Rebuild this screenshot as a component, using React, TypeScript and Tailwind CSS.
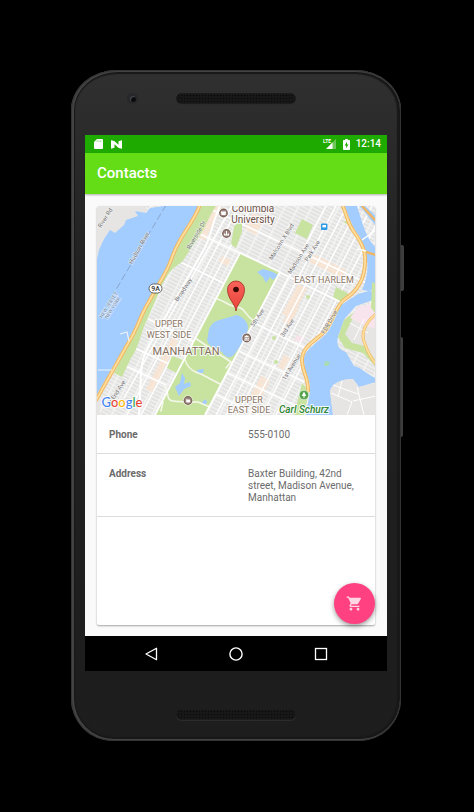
import type { ReactNode } from "react";
import { MdShoppingCart } from "react-icons/md";

const contact = [
  { label: "Phone", value: "555-0100" },
  { label: "Address", value: "Baxter Building, 42nd street, Madison Avenue, Manhattan" },
];

// x position of each avenue at the top and bottom edge of the map
const avenues = [
  [239, 127],
  [252, 141],
  [326, 216],
  [336, 226],
  [347, 237],
  [359, 249],
  [372, 262],
  [386, 276],
];

const crossStreets = [
  "M204 206L375 287",
  "M198 233L345 304",
  "M180 262L240 291",
  "M250 321L310 350",
  "M148 319L196 343",
  "M235 349L304 382",
  "M130 346L180 369",
  "M226 372L306 411",
  "M118 362L166 385",
  "M213 393L258 415",
];

const streetNames = [
  { name: "River Rd", x: 107, y: 219, angle: -57 },
  { name: "Hudson River", x: 141, y: 249, angle: -60 },
  { name: "Riverside Dr", x: 198, y: 236, angle: -60 },
  { name: "Broadway", x: 185, y: 291, angle: -57 },
  { name: "Malcolm X Blvd", x: 283, y: 243, angle: -58 },
  { name: "Madison Ave", x: 300, y: 260, angle: -58 },
  { name: "Park Ave", x: 314, y: 252, angle: -58 },
  { name: "5th Ave", x: 259, y: 319, angle: -57 },
  { name: "3rd Ave", x: 289, y: 329, angle: -57 },
  { name: "1st Avenue", x: 293, y: 368, angle: -58 },
  { name: "FDR Drive", x: 331, y: 323, angle: -60 },
  { name: "W End Ave", x: 118, y: 394, angle: -57 },
];

const places = [
  { name: "Columbia", x: 253, y: 212, size: 10, color: "#6b4f44" },
  { name: "University", x: 253, y: 223, size: 10, color: "#6b4f44" },
  { name: "EAST HARLEM", x: 324, y: 283, size: 9, color: "#8a7563" },
  { name: "UPPER", x: 169, y: 327, size: 9, color: "#8a7563" },
  { name: "WEST SIDE", x: 169, y: 338, size: 9, color: "#8a7563" },
  { name: "MANHATTAN", x: 186, y: 355, size: 11, color: "#846e5c" },
  { name: "UPPER", x: 249, y: 403, size: 9, color: "#8a7563" },
  { name: "EAST SIDE", x: 249, y: 413, size: 9, color: "#8a7563" },
];

const parkPath = "M240 253L280 272L205 415H155Z";
const westHighway = "M200 204C197 216 186 229 179 242C171 256 172 262 164 275L147 305C140 317 138 327 130 340L95 402";
const eastHighway =
  "M342 204C348 218 347 222 354 232C364 246 366 254 365 264C364 282 356 292 345 299C336 305 335 318 325 331C316 341 302 346 302 360C302 372 309 378 308 392";

function Poi({ x, y, children }: { x: number; y: number; children: ReactNode }) {
  return (
    <g transform={`translate(${x} ${y})`}>
      <circle r="5" fill="#fff" opacity="0.8" />
      <circle r="4.4" fill="#7b6056" />
      <circle r="3.3" fill="#fff" opacity="0.25" />
      <g fill="#fff">{children}</g>
    </g>
  );
}

function ContactMap() {
  return (
    <svg viewBox="97 206 278 209" className="block w-full" role="img" aria-label="Map">
      <defs>
        <pattern id="blocks" width="12" height="3.6" patternUnits="userSpaceOnUse" patternTransform="rotate(27)">
          <rect width="12" height="3.6" fill="#f4f4f3" />
          <rect x="0.6" y="0.5" width="10.4" height="2.4" fill="#e3e2e2" />
        </pattern>
        <linearGradient id="pin" x1="0" y1="0" x2="0" y2="1">
          <stop offset="0" stopColor="#f8625a" />
          <stop offset="1" stopColor="#e9453b" />
        </linearGradient>
      </defs>

      <rect x="96" y="206" width="280" height="209" fill="#e6e5e3" />
      <rect x="146" y="206" width="230" height="209" fill="url(#blocks)" />
      <path d="M130 340L150 300V415H100V398Z" fill="url(#blocks)" />

      {/* commercial areas */}
      <g fill="#fbe3cf" opacity="0.75">
        <path d="M253 213L264 218L256 235L245 229Z" />
        <path d="M222 256L231 260L227 266L219 262Z" />
        <path d="M215 206H222L205 240L199 238Z" />
        <path d="M298 284L307 288L292 318L282 314Z" />
        <path d="M313 254L346 270L342 278L309 262Z" />
        <path d="M261 376L270 380L260 402L249 398Z" />
        <path d="M172 338L178 341L152 392L146 389Z" />
        <path d="M292 305L299 308L290 325L283 322Z" />
        <path d="M284 355L290 358L283 370L278 367Z" />
      </g>
      <path d="M297 335L305 338L302 343L294 340Z" fill="#f7e3ea" />

      {/* streets */}
      <g stroke="#fff" fill="none">
        {avenues.map(([top, bottom]) => (
          <path key={top} d={`M${top} 206L${bottom} 415`} strokeWidth="1.5" />
        ))}
        {crossStreets.map((d) => (
          <path key={d} d={d} strokeWidth="1.6" />
        ))}
        <path d="M220 206C212 222 211 239 203 251L151 342C143 356 142 362 141 374L139 415" strokeWidth="2" />
        <path d="M232 206L124 398" strokeWidth="1.5" />
      </g>

      {/* parks */}
      <g fill="#c8e3a0">
        <path d={parkPath} />
        <path d="M199 206H216C207 219 206 228 198 238L182 262C167 271 164 281 157 297L147 320C141 331 139 348 131 358L122 377L114 373Z" />
        <path d="M302 219L313 225L307 239L295 233Z" />
        <path d="M234 226L242 220L242 232L236 248L231 244Z" />
        <path d="M336 287L349 294L342 302L333 297Z" />
        <path d="M172 356L186 361L178 374L167 368Z" />
        <path d="M343 222L350 219L352 226Z" />
        <path d="M302 383L309 391L304 415H294Z" />
        <circle cx="274" cy="338" r="2" />
        <circle cx="276" cy="362" r="2" />
        <circle cx="308" cy="297" r="2" />
      </g>

      {/* rivers */}
      <g fill="#a3ccff">
        <path d="M164 206L150 208L146 213L135 211L138 216L126 220L124 225L115 233L110 230L104 239L99 250L96 264V396L127 342L143 312L164 273L180 238L199 206Z" />
        <path d="M345 206H357L363 225C367 236 371 244 376 247V378C367 375 361 367 354 366L346 352C339 350 336 345 338 337L345 318L356 306L376 299V289L358 294L341 305C337 313 334 323 327 333C318 343 304 349 304 360C304 372 311 379 310 391L306 415H333L330 391C332 383 342 379 353 379L359 387L376 382V292L362 290C371 271 368 255 360 237C354 230 349 219 345 206Z" />
        <path d="M376 226L370 219L364 211L359 206H365L376 216Z" />
        <path d="M208 336C208 326 213 321 223 319L237 315C242 317 247 320 248 327C248 336 241 346 236 352C231 360 226 358 222 352L212 347C208 344 206 340 208 336Z" />
        <path d="M257 272L263 269L273 272L278 275L273 280L270 277L266 283L263 277Z" />
        <path d="M182 373L185 378L184 384L190 382L191 386L184 389L179 396L175 387L180 383Z" />
        <path d="M197 370L204 369L203 373L198 373Z" />
        <path d="M202 402L206 399L207 403L203 405Z" />
      </g>

      {/* Astoria side */}
      <path d="M376 304L357 310L344 320L338 337L345 348L363 353L376 367Z" fill="#e6e5e3" />
      <path d="M357 310L344 320L338 337L345 348L363 353L376 367V361L365 346L352 343L345 334Z" fill="#c8e3a0" />
      <path d="M358 307L376 303V328L368 327L350 318Z" fill="#f8e4ec" />
      <path d="M353 379C342 379 332 383 330 391L333 415H376V383L359 387Z" fill="#e6e5e3" />
      <g stroke="#fff" strokeWidth="1" fill="none">
        <path d="M331 393L352 402L347 415M342 381L338 397M353 401L376 396M357 387L364 415M333 385L358 394" />
        <path d="M350 323L368 333M354 340L364 319" />
      </g>
      <path d="M372 282L376 284V314L371 308Z" fill="#c8e3a0" />
      <path d="M325 361L330 362L328 366H324Z" fill="#a9dcb4" />

      {/* paths inside the park */}
      <g stroke="#f5f7ea" strokeWidth="1.6" fill="none" strokeLinecap="round">
        <path d="M213 298C223 299 228 306 237 307S244 315 254 321" />
        <path d="M240 253L280 272" stroke="#fff" />
        <path d="M184 354C185 365 190 371 201 374L220 384" />
        <path d="M195 338L231 362L226 368" />
        <path d="M164 386C170 392 165 400 173 401S187 402 198 402L210 407" />
        <path d="M163 402L161 411" />
      </g>
      <path d="M240 253L155 415M280 272L205 415" stroke="#fff" strokeWidth="1.8" />

      {/* highways */}
      <g fill="none">
        <g stroke="#eeb663" strokeWidth="3.8">
          <path d={westHighway} />
          <path d={eastHighway} />
          <path d="M376 314C365 323 360 334 365 344C368 353 373 361 377 365" strokeWidth="3" />
          <path d="M363 251L376 255M362 206L376 221" strokeWidth="2.4" />
        </g>
        <g stroke="#ffdf9c" strokeWidth="1.8">
          <path d={westHighway} />
          <path d={eastHighway} />
          <path d="M376 314C365 323 360 334 365 344C368 353 373 361 377 365" />
        </g>
        <path d="M362 240L376 230M358 249L366 251" stroke="#fff" strokeWidth="1.4" />
        <path d="M120 334L127 332L129 341M98 370H112" stroke="#eef3fa" strokeWidth="1.2" />
        <path d="M166 205L104 310" stroke="#7d97b6" strokeWidth="0.7" strokeDasharray="7 3" />
      </g>

      <g fontFamily="Roboto, 'Liberation Sans', sans-serif" textAnchor="middle">
        <g fontSize="6" fill="#6f6f6f" stroke="#fff" strokeOpacity="0.6" strokeWidth="1.2" paintOrder="stroke">
          {streetNames.map(({ name, x, y, angle }) => (
            <text key={name} transform={`translate(${x} ${y}) rotate(${angle})`}>
              {name}
            </text>
          ))}
        </g>
        <g fontSize="5" fill="#7c92ab" stroke="#fff" strokeOpacity="0.5" strokeWidth="1.4" paintOrder="stroke">
          <text transform="translate(110 306) rotate(-57)">NEW JERSEY</text>
          <text transform="translate(114 309) rotate(-57)">NEW YORK</text>
        </g>
        <g stroke="#fff" strokeOpacity="0.85" strokeWidth="2" strokeLinejoin="round" paintOrder="stroke">
          {places.map(({ name, x, y, size, color }) => (
            <text key={`${name}-${x}`} x={x} y={y} fontSize={size} fill={color}>
              {name}
            </text>
          ))}
          <text x="304" y="413" fontSize="10" fontStyle="italic" fontWeight="500" fill="#2f8632">
            Carl Schurz
          </text>
          <text x="122" y="407" fontSize="13" fontWeight="500" fontFamily="Lato, sans-serif">
            <tspan fill="#4285f4">G</tspan>
            <tspan fill="#ea4335">o</tspan>
            <tspan fill="#fbbc05">o</tspan>
            <tspan fill="#4285f4">g</tspan>
            <tspan fill="#34a853">l</tspan>
            <tspan fill="#ea4335">e</tspan>
          </text>
        </g>
        <rect x="149" y="284" width="13" height="9" rx="4.5" fill="#fff" stroke="#555" strokeWidth="0.9" />
        <text x="155.5" y="291" fontSize="7" fontWeight="500" fill="#333">
          9A
        </text>
      </g>

      <Poi x={223.5} y={213}>
        <path d="M-2.6 -1.5H2.6L2 2H-2Z" />
      </Poi>
      <Poi x={226.5} y={233.5}>
        <path d="M-2.6 2H2.6V0.5L1.3 -0.5V1H0.5V-2.5H-0.5V1H-1.3V-0.5L-2.6 0.5Z" />
      </Poi>
      <Poi x={246.7} y={338}>
        <path d="M-2.6 -1L0 -2.7L2.6 -1ZM-2 -0.5H-1V1.5H-2ZM-0.5 -0.5H0.5V1.5H-0.5ZM1 -0.5H2V1.5H1ZM-2.6 1.7H2.6V2.4H-2.6Z" />
      </Poi>
      <Poi x={188} y={400.5}>
        <path d="M-2.5 -2L-1 -1H1.5C2.8 0 2.5 2 1 2H-1C-2.3 1.5 -2 0 -1.5 -0.5Z" />
      </Poi>

      <circle cx="304" cy="395" r="4.8" fill="#55a44c" stroke="#fff" strokeWidth="0.6" />
      <path d="M304 391.5L306.3 396H304.5V398H303.5V396H301.7Z" fill="#fff" />
      <rect x="321" y="223.5" width="6.4" height="6.4" rx="1" fill="#2b9be8" />
      <rect x="322.4" y="225" width="3.6" height="2.4" fill="#fff" />

      <path
        d="M236 311C235.5 304 227.5 299 227.5 289.5A8.5 8.5 0 0 1 244.5 289.5C244.5 299 236.5 304 236 311Z"
        fill="url(#pin)"
        stroke="#a52a20"
        strokeWidth="0.8"
      />
      <circle cx="236" cy="289.5" r="2.8" fill="#3a0906" />
    </svg>
  );
}

function StatusBar() {
  return (
    <div className="flex h-[18px] items-center justify-between bg-[#1faa00] pr-1.5 pl-[9px] text-white">
      <div className="flex items-center gap-2">
        <svg viewBox="0 0 9 10" className="h-2.5 w-[9px]" fill="currentColor" aria-hidden="true">
          <path d="M3 0H8Q9 0 9 1V9Q9 10 8 10H1Q0 10 0 9V3Z" />
          <path d="M3.2 1.4V2.9M5 1.4V2.9M6.8 1.4V2.9" stroke="#1faa00" strokeWidth="0.5" />
        </svg>
        <svg viewBox="0 0 11 9" className="h-[9px] w-[11px]" fill="currentColor" aria-hidden="true">
          <path d="M0 0.3L3.3 1L7.5 4.8V1.2L11 0.3V8.7L7.7 8L3.5 4.2V7.8L0 8.7Z" />
        </svg>
      </div>
      <div className="flex items-center gap-1.5">
        <svg viewBox="0 0 14 12" className="h-3 w-3.5" fill="currentColor" aria-hidden="true">
          <path d="M13 1V11H3Z" opacity="0.35" />
          <path d="M9.5 4.5V11H3Z" />
          <text x="0" y="5" fontSize="5" fontWeight="700" fontFamily="Roboto, sans-serif">
            LTE
          </text>
        </svg>
        <svg viewBox="0 0 7 11" className="h-[11px] w-[7px]" fill="currentColor" aria-hidden="true">
          <path d="M2.2 0H4.8V1H6.2Q7 1 7 1.8V10.2Q7 11 6.2 11H0.8Q0 11 0 10.2V1.8Q0 1 0.8 1H2.2Z" />
          <path d="M4 2.8L1.6 6.5H3.2V9.2L5.5 5.4H4Z" fill="#1faa00" />
        </svg>
        <span className="text-[10px] leading-3 font-medium">12:14</span>
      </div>
    </div>
  );
}

function NavBar() {
  return (
    <nav className="flex h-[35px] items-center justify-center gap-[45px] bg-black text-white">
      <button type="button" aria-label="Back" className="flex w-10 justify-center">
        <svg viewBox="0 0 14 14" className="size-3.5" fill="none" stroke="currentColor" strokeWidth="1.3">
          <path d="M12.5 1.3V12.7L2 7Z" strokeLinejoin="round" />
        </svg>
      </button>
      <button type="button" aria-label="Home" className="flex w-10 justify-center">
        <svg viewBox="0 0 14 14" className="size-3.5" fill="none" stroke="currentColor" strokeWidth="1.4">
          <circle cx="7" cy="7" r="6.1" />
        </svg>
      </button>
      <button type="button" aria-label="Recent apps" className="flex w-10 justify-center">
        <svg viewBox="0 0 14 14" className="size-3.5" fill="none" stroke="currentColor" strokeWidth="1.3">
          <rect x="1.5" y="1.5" width="11" height="11" />
        </svg>
      </button>
    </nav>
  );
}

function Speaker() {
  return (
    <div className="h-[11px] w-[120px] rounded-full border border-[#1c1c1d] bg-[#171717] bg-[radial-gradient(#080808_1px,transparent_1px)] bg-[size:3px_3px] shadow-[0_1px_0_#2b2b2b]" />
  );
}

export default function App() {
  return (
    <div className="flex min-h-screen flex-col bg-black pt-[70px] pr-[73px] pb-[71px] pl-[71px] font-[Roboto,'Liberation_Sans',sans-serif]">
      <div className="relative flex flex-1 flex-col">
        {/* power and volume keys */}
        <div className="absolute top-[175px] -right-[3px] h-[46px] w-1 rounded-r-xs bg-[#3d3d3d]" />
        <div className="absolute top-[267px] -right-[2px] h-[100px] w-1 rounded-r-xs bg-[#3d3d3d]" />

        <div className="relative flex flex-1 flex-col rounded-t-[46px_40px] rounded-b-[42px] bg-linear-to-b from-[#303031] via-[#212122] via-30% to-[#1d1d1e] px-3.5 shadow-[inset_0_0_0_1px_#333334,inset_1px_0_0_2px_#434344,inset_0_0_1px_4px_#181818]">
          <div className="relative flex h-[65px] items-start justify-center pt-[23px]">
            <div className="absolute left-[42px] flex size-[11px] items-center justify-center rounded-full bg-[#28282a]">
              <div className="size-1.5 rounded-full bg-[#0b0b0c] shadow-[inset_1px_1px_1px_#4a5058]" />
            </div>
            <Speaker />
          </div>

          <div className="flex flex-1 flex-col bg-[#fafafa]">
            <StatusBar />
            <header className="relative flex h-[41px] items-center bg-[#64dd17] px-3 shadow-[0_1px_2px_rgba(0,0,0,0.3)]">
              <h1 className="text-[15px] font-medium text-white">Contacts</h1>
            </header>

            <main className="relative flex flex-1 flex-col px-3 pt-3 pb-[11px]">
              <section className="flex-1 overflow-hidden rounded-xs bg-white shadow-[0_1px_2px_rgba(0,0,0,0.35)]">
                <ContactMap />
                <table className="w-full table-fixed text-left text-[10px] leading-3 text-[#6b6b6b]">
                  <tbody>
                    {contact.map(({ label, value }) => (
                      <tr key={label} className="border-b border-[#dcdcdc] align-top">
                        <th scope="row" className="px-3 pt-3.5 pb-3 font-bold">
                          {label}
                        </th>
                        <td className="px-3 pt-3.5 pb-3">{value}</td>
                      </tr>
                    ))}
                  </tbody>
                </table>
              </section>

              <button
                type="button"
                aria-label="Cart"
                className="absolute right-3 bottom-3 flex size-[41px] items-center justify-center rounded-full bg-[#ff4081] text-[#ffd5e3] shadow-[0_2px_5px_rgba(0,0,0,0.4)]"
              >
                <MdShoppingCart className="size-[17px]" />
              </button>
            </main>

            <NavBar />
          </div>

          <div className="flex h-[70px] justify-center pt-[38px]">
            <Speaker />
          </div>
        </div>
      </div>
    </div>
  );
}
